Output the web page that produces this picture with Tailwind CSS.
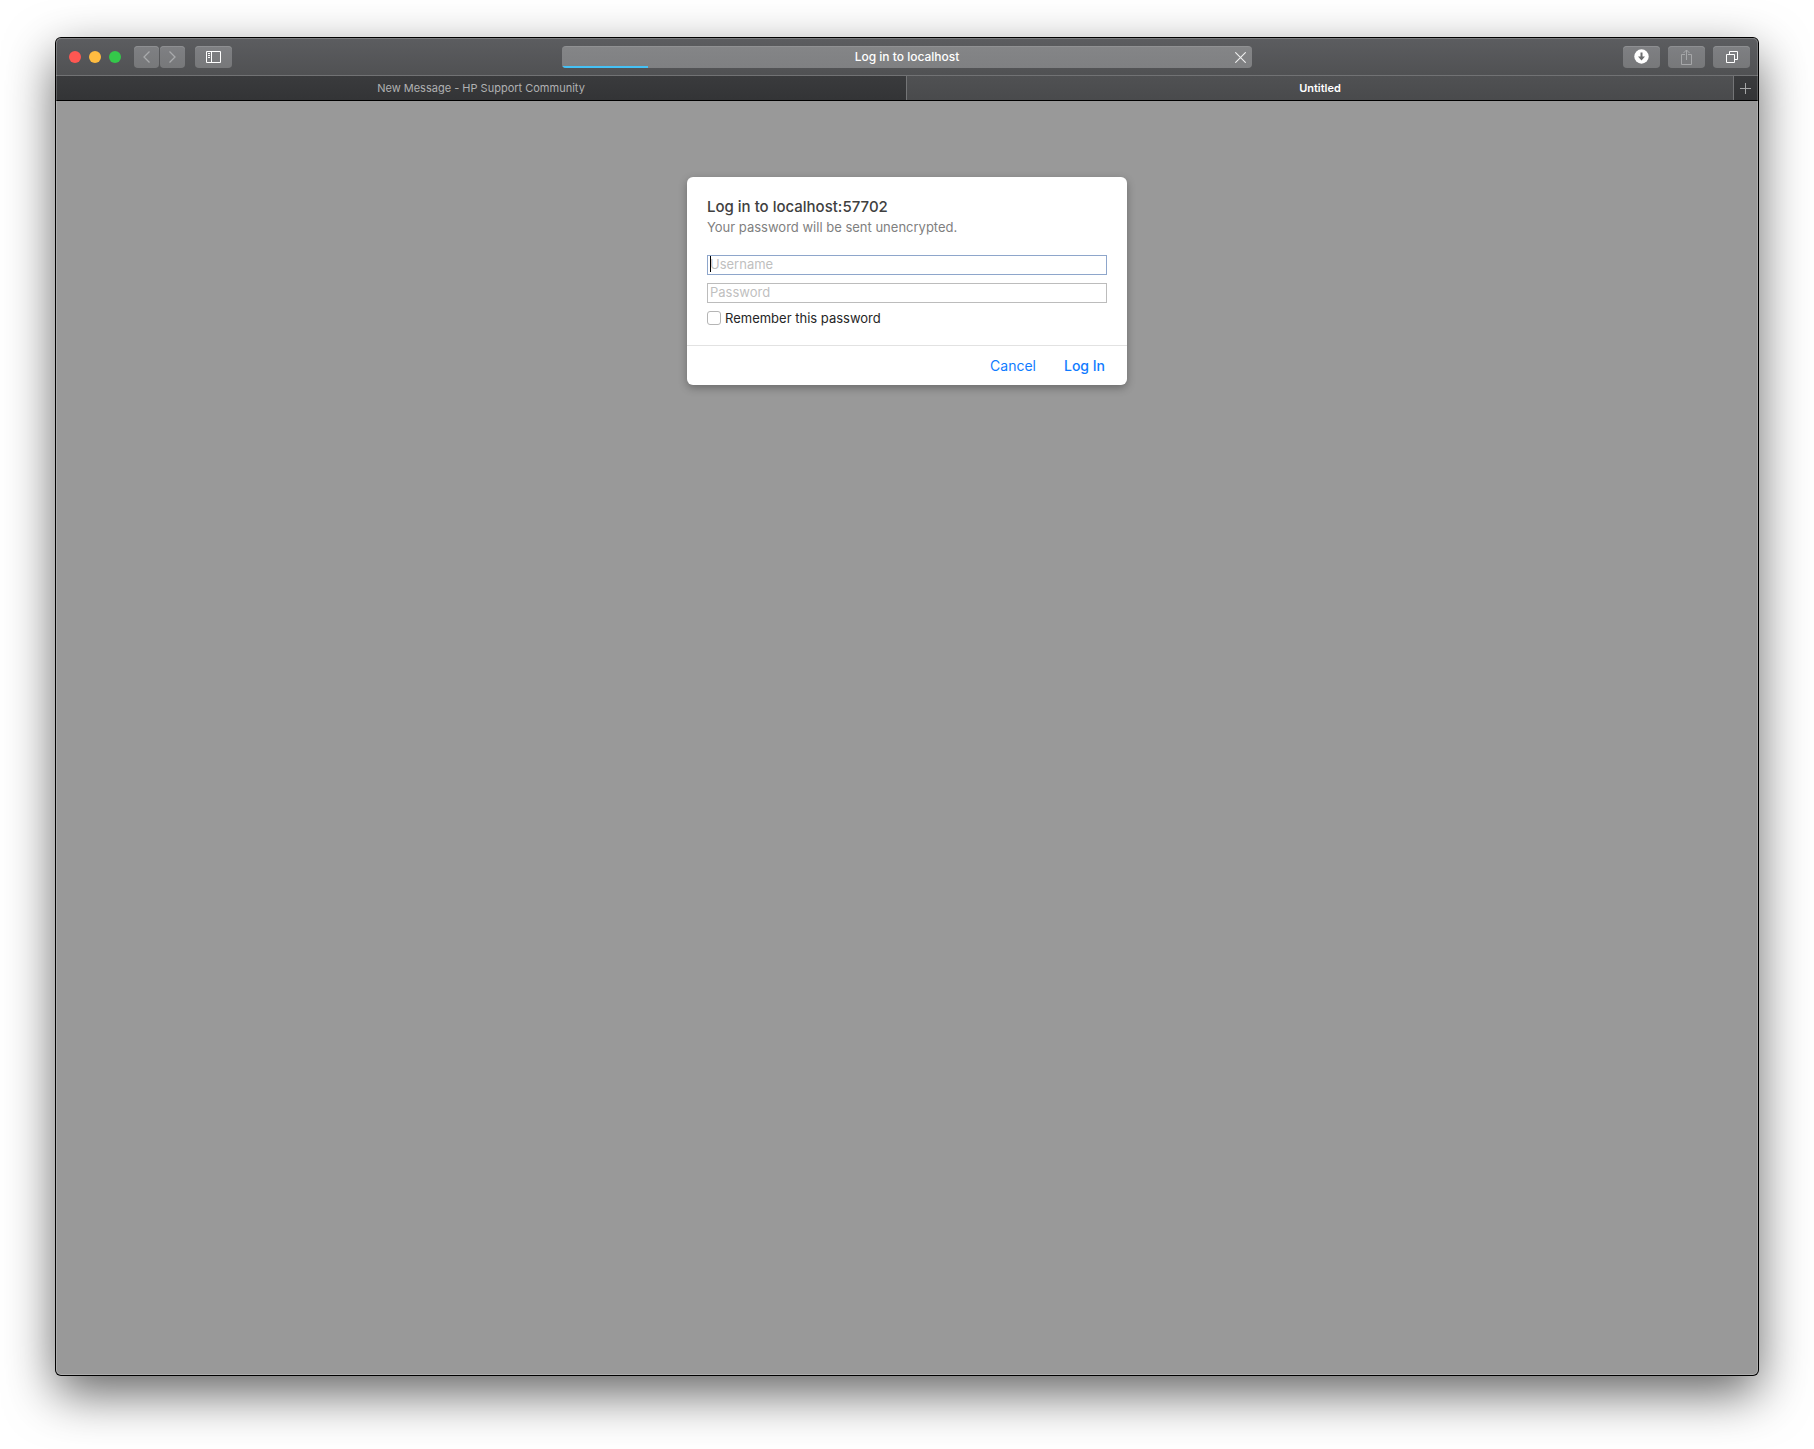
<!DOCTYPE html>
<html lang="en">
<head>
    <meta charset="UTF-8">
    <meta name="viewport" content="width=device-width, initial-scale=1.0">
    <title>Log in to localhost</title>
    <script src="https://cdn.jsdelivr.net/npm/@tailwindcss/browser@4"></script>
</head>
<body class="min-h-screen bg-white flex px-14 pt-[38px] pb-[74px] font-['Inter',sans-serif]">
    <div class="relative flex-1 min-w-0 flex flex-col rounded-[5px] overflow-hidden bg-[#999999] shadow-[0_0_0_1px_#000,0_18px_50px_rgba(0,0,0,0.62)]">
        <!-- Toolbar -->
        <header class="h-[38px] grid grid-cols-[1fr_minmax(0,690px)_1fr] items-center px-2 bg-linear-to-b from-[#5c5d60] to-[#505153] border-b border-[#717274]">
            <div class="flex items-center pl-[5px]">
                <div class="flex gap-2">
                    <button type="button" aria-label="Close" class="size-3 rounded-full bg-[#ff5752]"></button>
                    <button type="button" aria-label="Minimize" class="size-3 rounded-full bg-[#ffbc40]"></button>
                    <button type="button" aria-label="Zoom" class="size-3 rounded-full bg-[#34c84a]"></button>
                </div>
                <div class="flex gap-px ml-[13px]">
                    <button type="button" aria-label="Back" class="w-[25px] h-[22px] rounded-sm bg-linear-to-b from-[#7f8083] to-[#77787a] inset-shadow-[0_1px_0_#8e8f92] flex items-center justify-center">
                        <svg class="w-[7px] h-3" viewBox="0 0 7 12" fill="none" stroke="#a9aaac" stroke-width="1.3"><path d="M6.5 .5 1 6l5.500 5.500"/></svg>
                    </button>
                    <button type="button" aria-label="Forward" class="w-[25px] h-[22px] rounded-sm bg-linear-to-b from-[#7f8083] to-[#77787a] inset-shadow-[0_1px_0_#8e8f92] flex items-center justify-center">
                        <svg class="w-[7px] h-3" viewBox="0 0 7 12" fill="none" stroke="#a9aaac" stroke-width="1.3"><path d="M.5 .5 6 6 .5 11.500"/></svg>
                    </button>
                </div>
                <button type="button" aria-label="Show sidebar" class="ml-2.5 w-[37px] h-[22px] rounded-sm bg-linear-to-b from-[#7f8083] to-[#77787a] inset-shadow-[0_1px_0_#8e8f92] flex items-center justify-center">
                    <svg class="w-[15px] h-3" viewBox="0 0 15 12" fill="none" stroke="#fff" stroke-width="1"><path d="M.5 .5h14v11H.5zM5.500 .5v11M2 2.500h2M2 4.500h2M2 6.500h2"/></svg>
                </button>
            </div>

            <div class="relative h-[22px] rounded-sm overflow-hidden bg-linear-to-b from-[#848587] to-[#7f8082] border-t border-[#909193] flex items-center justify-center">
                <span class="text-xs font-medium text-white">Log in to localhost</span>
                <button type="button" aria-label="Stop loading" class="absolute right-[6px] top-[5px]">
                    <svg class="size-[11px]" viewBox="0 0 11 11" stroke="#f0f0f0" stroke-width="1.1"><path d="M.3 .3l10.400 10.400M10.700 .3.3 10.700"/></svg>
                </button>
                <div class="absolute left-0 bottom-0 h-0.5 w-[86px] bg-[#45c1f5]"></div>
            </div>

            <div class="flex justify-end gap-2">
                <button type="button" aria-label="Downloads" class="w-[37px] h-[22px] rounded-sm bg-linear-to-b from-[#7f8083] to-[#77787a] inset-shadow-[0_1px_0_#8e8f92] flex items-center justify-center">
                    <svg class="size-[15px]" viewBox="0 0 15 15"><circle cx="7.500" cy="7.500" r="7.200" fill="#fff"/><path d="M6.500 3.500h2v4h2.500L7.500 11.500 4 7.500h2.500z" fill="#6c6d6f"/></svg>
                </button>
                <button type="button" aria-label="Share" class="w-[37px] h-[22px] rounded-sm bg-linear-to-b from-[#7f8083] to-[#77787a] inset-shadow-[0_1px_0_#8e8f92] flex items-center justify-center">
                    <svg class="w-[11px] h-4" viewBox="0 0 11 16" fill="none" stroke="#a6a7a9" stroke-width="1"><path d="M4 5.500H.5v10h10v-10H7M5.500 11V1M2.500 4l3-3 3 3"/></svg>
                </button>
                <button type="button" aria-label="Tab overview" class="w-[37px] h-[22px] rounded-sm bg-linear-to-b from-[#7f8083] to-[#77787a] inset-shadow-[0_1px_0_#8e8f92] flex items-center justify-center">
                    <svg class="size-3" viewBox="0 0 12 12" fill="none" stroke="#fff" stroke-width="1"><path d="M.5 3.500h8v8h-8zM3.500 3.500v-3h8v8h-3"/></svg>
                </button>
            </div>
        </header>

        <!-- Tab bar -->
        <nav class="h-[25px] flex border-b border-black bg-linear-to-b from-[#3a3b3d] to-[#333436] text-[11px]">
            <a href="#" class="w-[calc(50%-1px)] flex items-center justify-center text-[#b0b1b2]">New Message - HP Support Community</a>
            <a href="#" class="flex-1 flex items-center justify-center font-semibold text-white bg-linear-to-b from-[#505153] to-[#494a4c] border-x border-[#747577]">Untitled</a>
            <button type="button" aria-label="New tab" class="w-6 pr-px flex items-center justify-center">
                <svg class="size-[11px]" viewBox="0 0 11 11" stroke="#a5a6a7" stroke-width="1"><path d="M5.500 0v11M0 5.500h11"/></svg>
            </button>
        </nav>

        <!-- Page -->
        <main class="flex-1 px-4 pt-[76px]">
            <form class="w-full max-w-[440px] mx-auto rounded-md bg-white shadow-[0_3px_9px_rgba(0,0,0,0.3)]">
                <div class="p-5">
                    <h1 class="text-[15px] leading-5 font-medium text-[#404040]">Log in to localhost:57702</h1>
                    <p class="mt-0.5 text-[13px] leading-4 text-[#7f7f7f]">Your password will be sent unencrypted.</p>
                    <div class="relative mt-5">
                        <input type="text" id="username" aria-label="Username" placeholder="Username"
                            class="block w-full h-5 px-0.5 pb-0.5 border border-[#8ea6cb] bg-white text-[13px] leading-4 placeholder:text-[#bfbfbf] focus:outline-none">
                        <span class="absolute left-[3px] top-px w-px h-4 bg-black"></span>
                    </div>
                    <input type="password" id="password" aria-label="Password" placeholder="Password"
                        class="mt-2 block w-full h-5 px-0.5 pb-0.5 border border-[#bcbcbc] bg-white text-[13px] leading-4 placeholder:text-[#bfbfbf] focus:outline-none">
                    <div class="mt-2 flex items-center gap-1 h-3.5">
                        <input type="checkbox" id="remember" class="appearance-none size-3.5 rounded-[3px] border border-[#b5b5b5] bg-white checked:bg-[#0a7aff]">
                        <label for="remember" class="text-[13px] leading-4 text-[#262626]">Remember this password</label>
                    </div>
                </div>
                <div class="flex justify-end items-center h-10 px-[22px] gap-7 border-t border-[#e2e2e2] text-sm text-[#0f7bff]">
                    <button type="button">Cancel</button>
                    <button type="submit" class="font-medium">Log In</button>
                </div>
            </form>
        </main>

        <!-- Light inner edge of the window -->
        <div class="absolute inset-0 rounded-[5px] border border-white/20 pointer-events-none"></div>
    </div>
</body>
</html>
